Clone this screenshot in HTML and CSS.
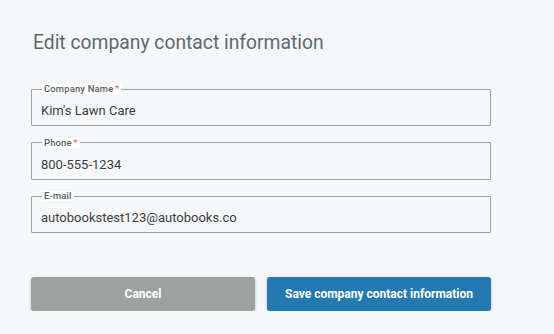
FILE: index.html
```html
<!DOCTYPE html>
<html>
<head>
<meta charset="utf-8">
<link rel="stylesheet" href="styles.css">
</head>
<body>
<div class="dialog">
  <h1 class="title">Edit company contact information</h1>
  <form class="form">
    <fieldset class="field">
      <legend class="label">Company Name <span class="req">*</span></legend>
      <div class="value">Kim's Lawn Care</div>
    </fieldset>
    <fieldset class="field">
      <legend class="label">Phone <span class="req">*</span></legend>
      <div class="value">800-555-1234</div>
    </fieldset>
    <fieldset class="field">
      <legend class="label">E-mail</legend>
      <div class="value">autobookstest123@autobooks.co</div>
    </fieldset>
    <div class="actions">
      <button type="button" class="btn btn-cancel">Cancel</button>
      <button type="button" class="btn btn-save">Save company contact information</button>
    </div>
  </form>
</div>
</body>
</html>
```
FILE: styles.css
```css
html, body {
  margin: 0;
  padding: 0;
  background: #f6f7fb;
  font-family: Roboto, "Liberation Sans", sans-serif;
}
.dialog {
  width: 460px;
  padding: 31px 0 0 31px;
}
.title {
  margin: 0 0 0 2px;
  font-size: 19.3px;
  font-weight: 400;
  color: #5d6872;
  line-height: 24px;
}
.form {
  margin-top: 29px;
  display: flex;
  flex-direction: column;
}
.field {
  margin: 0 0 11.5px 0;
  padding: 0 9px;
  border: 1px solid #9aa2a8;
  border-radius: 1px;
  height: 42px;
  box-sizing: border-box;
  min-width: 0;
}
.label {
  margin-left: 1px;
  padding: 0 2px;
  background: #ffffff;
  font-size: 9.4px;
  line-height: 10px;
  color: #555d64;
  font-weight: 500;
  letter-spacing: 0.2px;
}
.req {
  color: #e8703f;
  margin-left: -1px;
}
.value {
  font-size: 13px;
  color: #3b3f44;
  line-height: 20px;
  margin-top: 7px;
}
.actions {
  margin-top: 32.5px;
  display: flex;
  gap: 12px;
}
.btn {
  flex: 1;
  height: 34px;
  border: none;
  border-radius: 3px;
  color: #ffffff;
  font-family: Roboto, "Liberation Sans", sans-serif;
  font-weight: 700;
  font-size: 12px;
  box-shadow: 0 1px 3px rgba(0,0,0,0.25);
}
.btn-cancel {
  background: #9ba3a1;
}
.btn-save {
  background: #2479b1;
}
```
